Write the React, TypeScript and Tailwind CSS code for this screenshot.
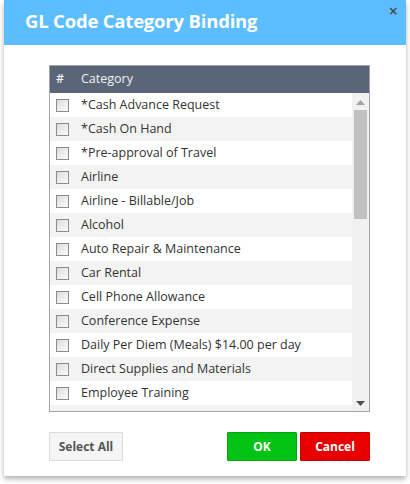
const categories = [
  '*Cash Advance Request',
  '*Cash On Hand',
  '*Pre-approval of Travel',
  'Airline',
  'Airline - Billable/Job',
  'Alcohol',
  'Auto Repair & Maintenance',
  'Car Rental',
  'Cell Phone Allowance',
  'Conference Expense',
  'Daily Per Diem (Meals) $14.00 per day',
  'Direct Supplies and Materials',
  'Employee Training',
  'Entertainment',
]

function Checkbox() {
  return (
    <span className="block w-[13px] h-[13px] border border-[#8c8c8c] bg-gradient-to-br from-[#dcdcdc] to-[#fbfbfb] shrink-0" />
  )
}

export default function App() {
  return (
    <div className="w-[410px] h-[484px] bg-white pl-[4px] pr-[4px] pt-0" style={{ fontFamily: '"Open Sans", "Noto Sans", sans-serif' }}>
      <div className="relative w-[402px] h-[476px] bg-white shadow-[0_3px_5px_rgba(0,0,0,0.3)] flex flex-col">
        <div className="h-[45px] bg-[#5cbdff] flex items-center pl-[21px]">
          <h1 className="text-white font-bold text-[18.5px] tracking-[-0.2px] leading-none mt-[-2px]">GL Code Category Binding</h1>
        </div>
        <button className="absolute right-[8px] top-[3px] text-[#4a4a4a] text-[16px] font-semibold leading-none">×</button>

        <div className="mt-[20px] ml-[45px] mr-[36px] border border-[#a3a3a3] h-[347px] flex flex-col">
          <div className="h-[27px] bg-[#5b6578] flex items-center text-[#eef1f5] text-[12.5px] shrink-0">
            <span className="w-[31px] pl-[6px] font-semibold">#</span>
            <span>Category</span>
          </div>
          <div className="flex flex-1 overflow-hidden">
            <div className="flex-1 overflow-hidden">
              {categories.map((c, i) => (
                <div key={c} className={`h-[24px] flex items-center ${i % 2 ? 'bg-[#f3f3f3]' : 'bg-white'}`}>
                  <span className="w-[31px] pl-[6px]"><Checkbox /></span>
                  <span className="text-[12.5px] text-[#333] whitespace-nowrap">{c}</span>
                </div>
              ))}
            </div>
            <div className="w-[17px] bg-[#f1f1f1] flex flex-col items-center shrink-0">
              <svg width="9" height="5" viewBox="0 0 9 5" className="mt-[7px]"><path d="M4.5 0L9 5H0z" fill="#a3a3a3" /></svg>
              <div className="w-[13px] h-[109px] bg-[#c1c1c1] mt-[5px]" />
              <div className="flex-1" />
              <svg width="9" height="5" viewBox="0 0 9 5" className="mb-[5px]"><path d="M0 0h9L4.5 5z" fill="#505050" /></svg>
            </div>
          </div>
        </div>

        <div className="mt-[20px] ml-[45px] mr-[36px] flex items-center">
          <button className="w-[74px] h-[29px] bg-[#f5f5f5] border border-[#dcdcdc] text-[#555] text-[12px] font-bold rounded-[1px]">Select All</button>
          <div className="flex-1" />
          <button className="w-[70px] h-[29px] bg-[#00c314] border border-[#05a512] text-white text-[12px] font-bold rounded-[1px]">OK</button>
          <button className="ml-[3px] w-[70px] h-[29px] bg-[#e80000] border border-[#c00000] text-white text-[12px] font-bold rounded-[1px]">Cancel</button>
        </div>
      </div>
    </div>
  )
}
